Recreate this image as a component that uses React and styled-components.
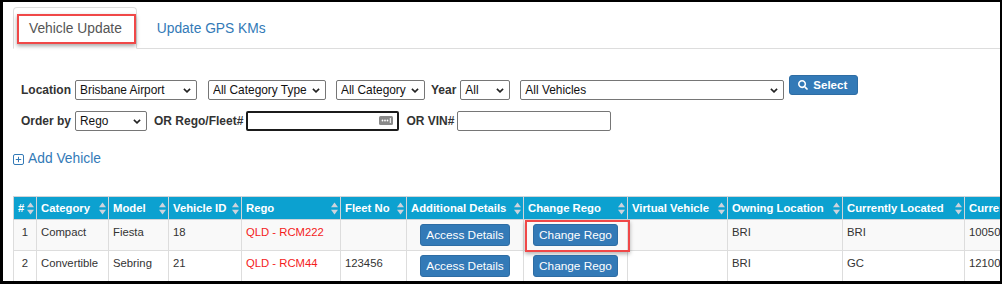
import React from 'react';
import styled, { createGlobalStyle, css } from 'styled-components';
import { FaSearch } from 'react-icons/fa';

const GlobalStyle = createGlobalStyle`
  html, body { margin: 0; padding: 0; background: #fff; }
  body { font-family: "Liberation Sans", Arial, sans-serif; }
  * { box-sizing: border-box; }
`;

const Frame = styled.div`
  width: 1002px;
  height: 284px;
  border-style: solid;
  border-color: #000;
  border-width: 2px 2px 3px 3px;
  overflow: hidden;
  background: #fff;
  padding: 5px 0 0 10px;
`;

const Nav = styled.ul`
  display: flex;
  margin: 0;
  padding: 0;
  list-style: none;
  border-bottom: 1px solid #ddd;
`;

const Tab = styled.li`
  display: flex;
  align-items: center;
  margin-bottom: -1px;
  font-size: 13.8px;
  ${(p) =>
    p.$active
      ? css`
          border: 1px solid #ddd;
          border-bottom-color: #fff;
          border-radius: 4px 4px 0 0;
          padding: 6px 0 4px 3px;
          color: #555;
          background: #fff;
        `
      : css`
          padding: 1px 0 0 20px;
          color: #337ab7;
        `}
`;

const TabHighlight = styled.span`
  display: block;
  border: 2px solid #f04848;
  box-shadow: 0 2px 4px rgba(0, 0, 0, 0.35);
  padding: 5px 12px 5px 10px;
  line-height: 16px;
`;

const Filters = styled.div`
  margin-top: 31px;
  padding-left: 8px;
  display: flex;
  flex-direction: column;
  gap: 11px;
`;

const FilterRow = styled.div`
  display: flex;
  align-items: center;
  height: 20px;
`;

const Label = styled.label`
  font-weight: bold;
  font-size: 12px;
  color: #333;
  white-space: nowrap;
  margin-left: ${(p) => p.$ml || 0}px;
`;

const SelectWrap = styled.div`
  position: relative;
  flex: none;
  width: ${(p) => p.$w}px;
  height: 20px;
  margin-left: ${(p) => p.$ml || 0}px;
`;

const Select = styled.select`
  appearance: none;
  -webkit-appearance: none;
  width: 100%;
  height: 100%;
  margin: 0;
  border: 1px solid #767676;
  border-radius: 2px;
  background: #fff;
  font-family: inherit;
  font-size: 11.9px;
  color: #111;
  padding: 0 14px 0 4px;
`;

const Chevron = styled.svg`
  position: absolute;
  right: 6px;
  top: 8px;
  width: 8px;
  height: 5px;
  pointer-events: none;
`;

const SearchButton = styled.button`
  flex: none;
  display: inline-flex;
  align-items: center;
  gap: 5px;
  width: 69px;
  height: 20px;
  margin: -10px 0 0 5px;
  padding: 0 0 0 8px;
  background: #337ab7;
  border: 1px solid #2e6da4;
  border-radius: 3px;
  color: #fff;
  font-family: inherit;
  font-weight: bold;
  font-size: 11.5px;
`;

const InputWrap = styled.div`
  position: relative;
  flex: none;
  width: ${(p) => p.$w}px;
  height: 20px;
  margin-left: ${(p) => p.$ml || 0}px;
`;

const TextInput = styled.input`
  width: 100%;
  height: 100%;
  margin: 0;
  border-radius: 2px;
  padding: 0 4px;
  font-family: inherit;
  font-size: 12px;
  outline: none;
  border: ${(p) => (p.$focused ? '2px solid #1b1b1b' : '1px solid #767676')};
`;

const KeyIcon = styled.svg`
  position: absolute;
  right: 6px;
  top: 5px;
  width: 14px;
  height: 9px;
  pointer-events: none;
`;

const AddLink = styled.a`
  display: flex;
  align-items: center;
  gap: 4px;
  margin-top: 18px;
  color: #337ab7;
  font-size: 13.8px;
  line-height: 20px;
  text-decoration: none;
  width: max-content;
`;

const TableWrap = styled.div`
  margin-top: 27px;
`;

const Table = styled.table`
  border-collapse: collapse;
  table-layout: fixed;
  width: 1081px;
  font-size: 11.3px;
  color: #333;
`;

const Th = styled.th`
  background: #0ca1d0;
  color: #fff;
  font-weight: bold;
  font-size: 11.3px;
  text-align: left;
  padding: 3px 2px 3px 4px;
  line-height: 16px;
  border: 1px solid #d0d4d8;
  white-space: nowrap;
  overflow: hidden;
`;

const HeadInner = styled.div`
  display: flex;
  align-items: center;
  justify-content: space-between;
  gap: 2px;
`;

const SortIcon = styled.svg`
  flex: none;
  width: 7px;
  height: 13px;
`;

const Tr = styled.tr`
  background: ${(p) => (p.$odd ? '#f9f9f9' : '#fff')};
`;

const Td = styled.td`
  position: relative;
  padding: 4px 4px 4px 4px;
  line-height: 17px;
  height: 30px;
  vertical-align: top;
  border: 1px solid #ddd;
  white-space: nowrap;
  overflow: ${(p) => (p.$visible ? 'visible' : 'hidden')};
  text-align: ${(p) => p.$align || 'left'};
  color: ${(p) => (p.$red ? '#f41c1c' : '#333')};
`;

const ActionButton = styled.button`
  display: inline-flex;
  align-items: center;
  justify-content: center;
  vertical-align: top;
  height: 22px;
  padding: 0 5px;
  background: #337ab7;
  border: 1px solid #2e6da4;
  border-radius: 3px;
  color: #fff;
  font-family: inherit;
  font-size: 11.8px;
`;

const CellHighlight = styled.span`
  position: absolute;
  left: 1px;
  right: -3px;
  top: 0;
  bottom: -2px;
  border: 2px solid #f04848;
  box-shadow: 0 2px 4px rgba(0, 0, 0, 0.3);
  pointer-events: none;
`;

const ChevronIcon = () => (
  <Chevron viewBox="0 0 8 5">
    <path d="M0.9 0.9 L4 3.9 L7.1 0.9" fill="none" stroke="#222" strokeWidth="1.6" />
  </Chevron>
);

const Dropdown = ({ w, ml, value }) => (
  <SelectWrap $w={w} $ml={ml}>
    <Select defaultValue={value}>
      <option>{value}</option>
    </Select>
    <ChevronIcon />
  </SelectWrap>
);

const Sort = () => (
  <SortIcon viewBox="0 0 7 13">
    <path d="M3.5 0.5 L7 5.2 L0 5.2 Z" fill="#cdd3dc" />
    <path d="M3.5 12.5 L7 7.8 L0 7.8 Z" fill="#cdd3dc" />
  </SortIcon>
);

const PlusSquare = () => (
  <svg width="11" height="11" viewBox="0 0 11 11">
    <rect x="0.5" y="0.5" width="10" height="10" rx="1.5" fill="none" stroke="currentColor" strokeWidth="1" />
    <path d="M5.5 2.8 V8.2 M2.8 5.5 H8.2" stroke="currentColor" strokeWidth="1" />
  </svg>
);

const columns = [
  { title: '#', w: 23 },
  { title: 'Category', w: 72 },
  { title: 'Model', w: 60 },
  { title: 'Vehicle ID', w: 73 },
  { title: 'Rego', w: 99 },
  { title: 'Fleet No', w: 66 },
  { title: 'Additional Details', w: 117 },
  { title: 'Change Rego', w: 104 },
  { title: 'Virtual Vehicle', w: 100 },
  { title: 'Owning Location', w: 115 },
  { title: 'Currently Located', w: 122 },
  { title: 'Current KMs', w: 130 },
];

const rows = [
  { n: 1, cat: 'Compact', model: 'Fiesta', id: '18', rego: 'QLD - RCM222', fleet: '', own: 'BRI', cur: 'BRI', kms: '100500', hl: true },
  { n: 2, cat: 'Convertible', model: 'Sebring', id: '21', rego: 'QLD - RCM44', fleet: '123456', own: 'BRI', cur: 'GC', kms: '121000', hl: false },
];

export default function App() {
  return (
    <>
      <GlobalStyle />
      <Frame>
        <Nav>
          <Tab $active>
            <TabHighlight>Vehicle Update</TabHighlight>
          </Tab>
          <Tab>Update GPS KMs</Tab>
        </Nav>

        <Filters>
          <FilterRow>
            <Label>Location</Label>
            <Dropdown w={122} ml={4} value="Brisbane Airport" />
            <Dropdown w={118} ml={11} value="All Category Type" />
            <Dropdown w={89} ml={10} value="All Category" />
            <Label $ml={6}>Year</Label>
            <Dropdown w={50} ml={4} value="All" />
            <Dropdown w={264} ml={10} value="All Vehicles" />
            <SearchButton>
              <FaSearch size={10} />
              Select
            </SearchButton>
          </FilterRow>
          <FilterRow>
            <Label>Order by</Label>
            <Dropdown w={72} ml={4} value="Rego" />
            <Label $ml={7}>OR Rego/Fleet#</Label>
            <InputWrap $w={153} $ml={3}>
              <TextInput $focused />
              <KeyIcon viewBox="0 0 14 9">
                <rect x="0" y="0" width="14" height="9" rx="1.5" fill="#8a8a8a" />
                <circle cx="3.5" cy="4.5" r="0.9" fill="#fff" />
                <circle cx="6" cy="4.5" r="0.9" fill="#fff" />
                <circle cx="8.5" cy="4.5" r="0.9" fill="#fff" />
                <rect x="10.8" y="2" width="1" height="5" fill="#fff" />
              </KeyIcon>
            </InputWrap>
            <Label $ml={7}>OR VIN#</Label>
            <InputWrap $w={154} $ml={3}>
              <TextInput />
            </InputWrap>
          </FilterRow>
        </Filters>

        <AddLink href="#">
          <PlusSquare />
          Add Vehicle
        </AddLink>

        <TableWrap>
          <Table>
            <colgroup>
              {columns.map((c) => (
                <col key={c.title} style={{ width: c.w }} />
              ))}
            </colgroup>
            <thead>
              <tr>
                {columns.map((c) => (
                  <Th key={c.title}>
                    <HeadInner>
                      <span>{c.title}</span>
                      <Sort />
                    </HeadInner>
                  </Th>
                ))}
              </tr>
            </thead>
            <tbody>
              {rows.map((r, i) => (
                <Tr key={r.n} $odd={i % 2 === 0}>
                  <Td $align="center">{r.n}</Td>
                  <Td>{r.cat}</Td>
                  <Td>{r.model}</Td>
                  <Td>{r.id}</Td>
                  <Td $red>{r.rego}</Td>
                  <Td>{r.fleet}</Td>
                  <Td $align="center">
                    <ActionButton>Access Details</ActionButton>
                  </Td>
                  <Td $align="center" $visible>
                    <ActionButton>Change Rego</ActionButton>
                    {r.hl && <CellHighlight />}
                  </Td>
                  <Td></Td>
                  <Td>{r.own}</Td>
                  <Td>{r.cur}</Td>
                  <Td>{r.kms}</Td>
                </Tr>
              ))}
            </tbody>
          </Table>
        </TableWrap>
      </Frame>
    </>
  );
}
